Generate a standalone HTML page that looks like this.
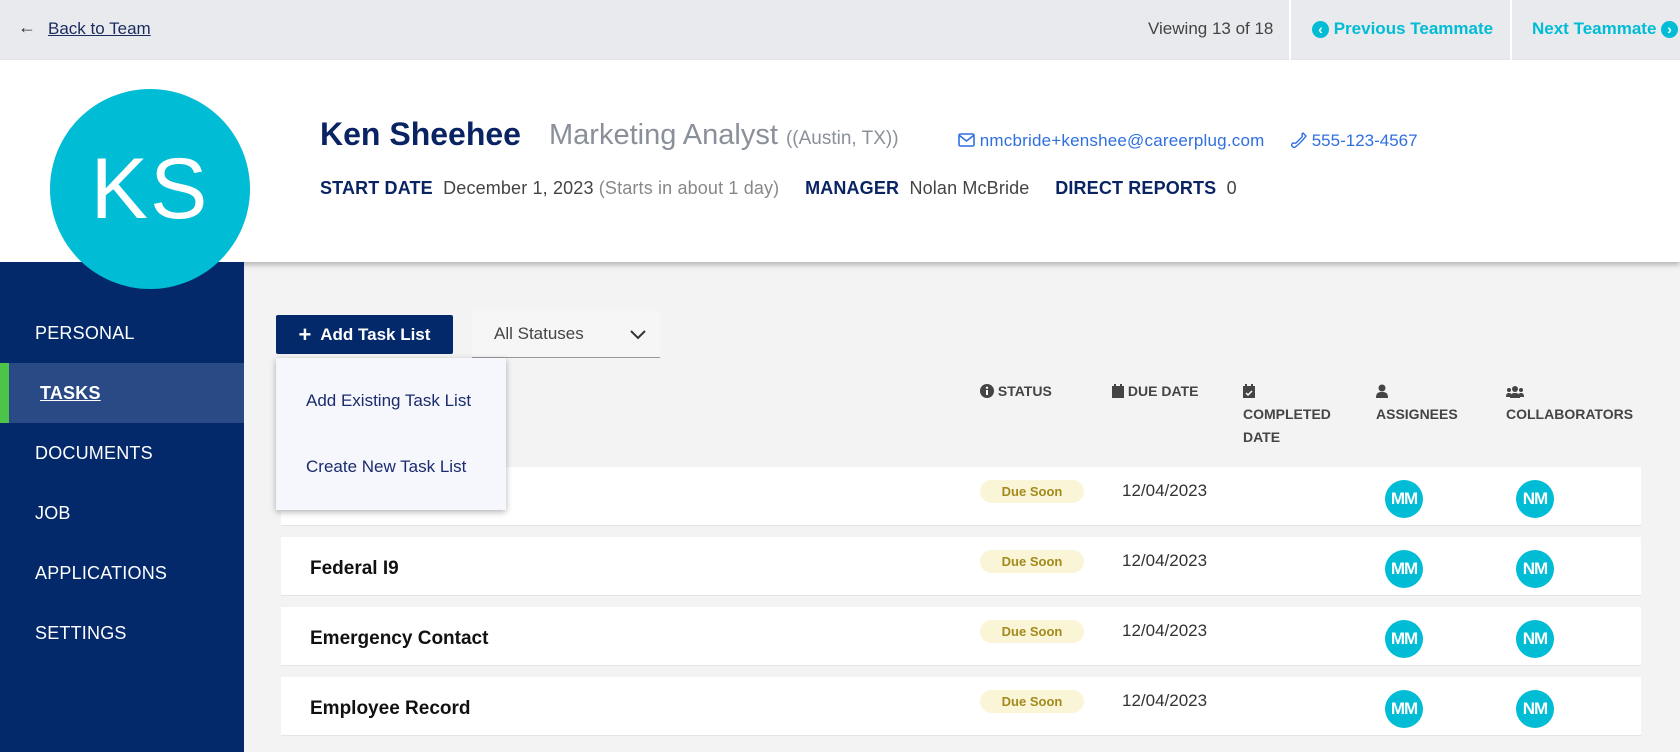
<!DOCTYPE html>
<html><head><meta charset="utf-8"><style>
*{box-sizing:border-box;margin:0;padding:0}
body{width:1680px;height:752px;overflow:hidden;background:#f3f3f3;font-family:"Liberation Sans",Arial,sans-serif;position:relative}
.abs{position:absolute}
#top{left:0;top:0;width:1680px;height:60px;background:#e9eaee}
#hdr{left:0;top:60px;width:1680px;height:202px;background:#fff;box-shadow:0 3px 5px rgba(0,0,0,.25)}
#side{left:0;top:262px;width:244px;height:490px;background:#03296b}
.nav{position:absolute;left:35px;color:#fff;font-size:18px;letter-spacing:.2px}
.teal{color:#00bcd4;font-weight:bold;font-size:17px;white-space:nowrap}
.circ{display:inline-block;width:17px;height:17px;border-radius:50%;background:#00bcd4;color:#fff;font-size:14px;text-align:center;line-height:16px;vertical-align:0px;font-weight:bold}
.th{position:absolute;color:#444;font-size:14px;font-weight:bold;line-height:23px}
.th svg{vertical-align:-2px}
.row{position:absolute;left:281px;width:1360px;height:59px;background:#fff;border-bottom:1px solid #e4e4e4}
.row .t{position:absolute;left:29px;top:21px;font-size:19px;font-weight:bold;color:#111}
.badge{position:absolute;left:699px;top:13px;width:104px;height:23px;border-radius:12px;background:#fbf5d8;color:#a38a1c;font-size:13px;font-weight:bold;text-align:center;line-height:23px}
.dt{position:absolute;left:841px;top:14px;font-size:17px;color:#333}
.av{position:absolute;top:13px;width:38px;height:38px;border-radius:50%;background:#00bcd4;color:#fff;font-weight:bold;font-size:17px;text-align:center;line-height:38px;letter-spacing:-1px}
</style></head><body>
<div id="top" class="abs">
 <div class="abs" style="left:18px;top:17px;font-size:18px;color:#333">&#8592;</div>
 <div class="abs" style="left:48px;top:19px;font-size:17px;color:#1a2b5e;text-decoration:underline">Back to Team</div>
 <div class="abs" style="left:1148px;top:19px;font-size:17px;color:#444">Viewing 13 of 18</div>
 <div class="abs" style="left:1289px;top:0;width:2px;height:60px;background:#fff"></div>
 <div class="abs teal" style="left:1312px;top:19px"><span class="circ">&#8249;</span> Previous Teammate</div>
 <div class="abs" style="left:1510px;top:0;width:2px;height:60px;background:#fff"></div>
 <div class="abs teal" style="left:1532px;top:19px">Next Teammate <span class="circ">&#8250;</span></div>
</div>
<div id="hdr" class="abs">
 <div class="abs" style="left:320px;top:56px;font-size:32px;color:#0a2463;font-weight:bold">Ken Sheehee</div>
 <div class="abs" style="left:549px;top:59px;font-size:29px;color:#8a9099">Marketing Analyst <span style="font-size:19px">((Austin, TX))</span></div>
 <div class="abs" style="left:958px;top:71px;font-size:17px;color:#2f6fe0;white-space:nowrap"><svg width="17" height="14" viewBox="0 0 17 14" style="vertical-align:-1px"><rect x="1" y="1" width="15" height="12" rx="1.5" fill="none" stroke="#2f6fe0" stroke-width="1.6"/><path d="M1.5 2.5L8.5 8L15.5 2.5" fill="none" stroke="#2f6fe0" stroke-width="1.6"/></svg> <span style="letter-spacing:.2px">nmcbride+kenshee@careerplug.com</span></div>
 <div class="abs" style="left:1291px;top:71px;font-size:17px;color:#2f6fe0"><svg width="16" height="16" viewBox="0 0 16 16" style="vertical-align:-2px"><path d="M12 1l3 3-2 2.5c-1 1.5-6 6.5-7.5 7.5L3 16 0 13l2-2c1 0 2 .5 3 0l6-6c.5-1 0-2 0-3z" fill="none" stroke="#2f6fe0" stroke-width="1.4"/></svg> 555-123-4567</div>
 <div class="abs" style="left:320px;top:118px;font-size:18px;color:#444;white-space:nowrap;letter-spacing:.15px"><b style="color:#0a2463">START DATE</b>&nbsp; December 1, 2023 <span style="color:#888">(Starts in about 1 day)</span>&nbsp;&nbsp;&nbsp;&nbsp; <b style="color:#0a2463">MANAGER</b>&nbsp; Nolan McBride&nbsp;&nbsp;&nbsp;&nbsp; <b style="color:#0a2463">DIRECT REPORTS</b>&nbsp; 0</div>
</div>
<div id="side" class="abs">
 <div class="nav" style="top:61px">PERSONAL</div>
 <div class="abs" style="left:0;top:101px;width:244px;height:60px;background:#2a4a86"></div>
 <div class="abs" style="left:0;top:101px;width:9px;height:60px;background:#4cc44a"></div>
 <div class="nav" style="top:121px;left:40px;font-weight:bold;text-decoration:underline">TASKS</div>
 <div class="nav" style="top:181px">DOCUMENTS</div>
 <div class="nav" style="top:241px">JOB</div>
 <div class="nav" style="top:301px">APPLICATIONS</div>
 <div class="nav" style="top:361px">SETTINGS</div>
</div>
<div class="abs" style="left:50px;top:89px;width:200px;height:200px;border-radius:50%;background:#00bcd4;color:#fff;font-size:86px;text-align:center;line-height:200px;letter-spacing:2px">KS</div>
<div class="abs" style="left:276px;top:315px;width:177px;height:39px;background:#03296b;border-radius:2px;color:#fff;font-weight:bold;font-size:17px;line-height:39px;text-align:center"><span style="font-size:22px;vertical-align:-2px">+</span>&nbsp; Add Task List</div>
<div class="abs" style="left:472px;top:311px;width:188px;height:47px;background:#f6f6f6;border-bottom:1px solid #999;font-size:17px;color:#444;line-height:46px;padding-left:22px">All Statuses<svg width="16" height="10" viewBox="0 0 16 10" style="position:absolute;right:14px;top:19px"><path d="M1 1l7 7 7-7" fill="none" stroke="#333" stroke-width="2"/></svg></div>
<div class="th" style="left:980px;top:380px"><svg width="14" height="14" viewBox="0 0 14 14"><circle cx="7" cy="7" r="7" fill="#444"/><rect x="6" y="6" width="2" height="5" fill="#fff"/><circle cx="7" cy="3.8" r="1.2" fill="#fff"/></svg> STATUS</div>
<div class="th" style="left:1112px;top:380px"><svg width="12" height="14" viewBox="0 0 12 14"><rect x="0" y="2" width="12" height="12" fill="#444"/><rect x="2" y="0" width="2" height="3" fill="#444"/><rect x="8" y="0" width="2" height="3" fill="#444"/></svg> DUE DATE</div>
<div class="th" style="left:1243px;top:380px"><svg width="12" height="14" viewBox="0 0 12 14"><rect x="0" y="2" width="12" height="12" fill="#444"/><rect x="2" y="0" width="2" height="3" fill="#444"/><rect x="8" y="0" width="2" height="3" fill="#444"/><path d="M3 9l2 2 4-4" stroke="#fff" stroke-width="1.5" fill="none"/></svg><br>COMPLETED<br>DATE</div>
<div class="th" style="left:1376px;top:380px"><svg width="12" height="14" viewBox="0 0 12 14"><circle cx="6" cy="4" r="3.5" fill="#444"/><path d="M0 14c0-5 2-6 6-6s6 1 6 6z" fill="#444"/></svg><br>ASSIGNEES</div>
<div class="th" style="left:1506px;top:380px"><svg width="18" height="13" viewBox="0 0 18 13"><circle cx="9" cy="4" r="3" fill="#444"/><circle cx="3" cy="5" r="2" fill="#444"/><circle cx="15" cy="5" r="2" fill="#444"/><path d="M4 13c0-4 2-5 5-5s5 1 5 5z" fill="#444"/><path d="M0 12c0-3 1-4 3-4s2 1 2 1v3z M18 12c0-3-1-4-3-4s-2 1-2 1v3z" fill="#444"/></svg><br>COLLABORATORS</div>
<div class="row" style="top:467px"><div class="t"></div><div class="badge">Due Soon</div><div class="dt">12/04/2023</div><div class="av" style="left:1104px">MM</div><div class="av" style="left:1235px">NM</div></div>
<div class="row" style="top:537px"><div class="t">Federal I9</div><div class="badge">Due Soon</div><div class="dt">12/04/2023</div><div class="av" style="left:1104px">MM</div><div class="av" style="left:1235px">NM</div></div>
<div class="row" style="top:607px"><div class="t">Emergency Contact</div><div class="badge">Due Soon</div><div class="dt">12/04/2023</div><div class="av" style="left:1104px">MM</div><div class="av" style="left:1235px">NM</div></div>
<div class="row" style="top:677px"><div class="t">Employee Record</div><div class="badge">Due Soon</div><div class="dt">12/04/2023</div><div class="av" style="left:1104px">MM</div><div class="av" style="left:1235px">NM</div></div>
<div class="abs" style="left:276px;top:358px;width:230px;height:152px;background:#f6f7fc;box-shadow:0 2px 6px rgba(0,0,0,.3);color:#1a2b6e;font-size:17px">
 <div class="abs" style="left:30px;top:33px">Add Existing Task List</div>
 <div class="abs" style="left:30px;top:99px">Create New Task List</div>
</div>
</body></html>
